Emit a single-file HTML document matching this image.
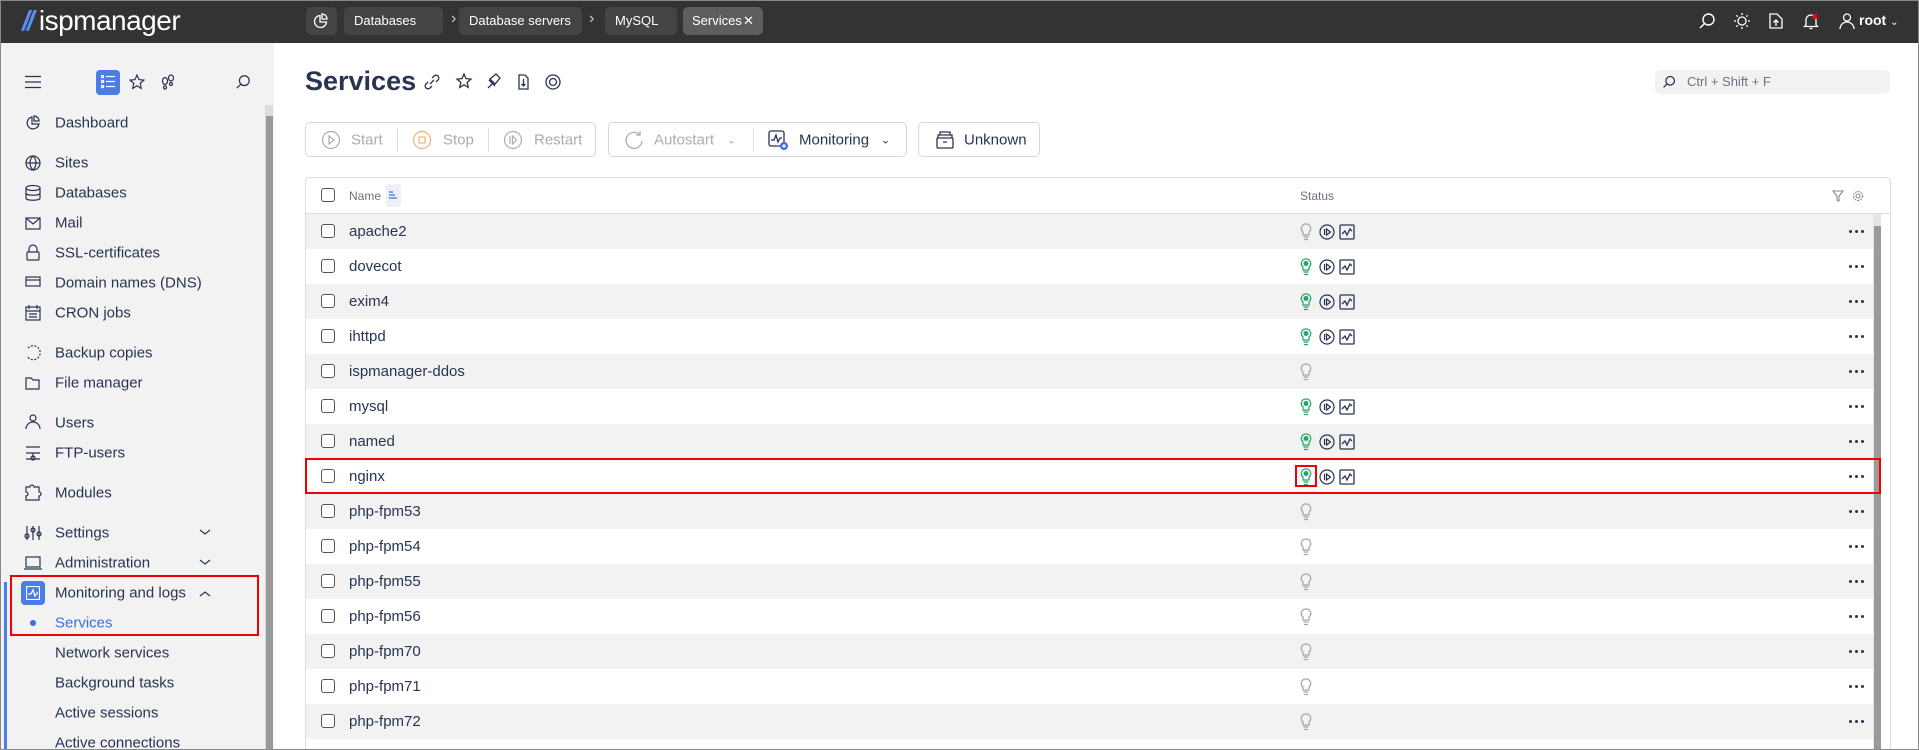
<!DOCTYPE html>
<html style="overflow:hidden;width:1919px;height:750px"><head><meta charset="utf-8"><style>
*{box-sizing:border-box;margin:0;padding:0}
body{width:1919px;height:750px;overflow:hidden;font-family:"Liberation Sans",sans-serif;background:#fff;position:relative;color:#283452}
.a{position:absolute}
.top{left:0;top:0;width:1919px;height:43px;background:#333}
.bc{position:absolute;top:7px;height:28px;background:#444;border-radius:5px;color:#fff;font-size:13px;line-height:28px;padding-left:10px;white-space:nowrap}
.side{left:0;top:43px;width:274px;height:707px;background:#f2f2f2}
.si{position:absolute;left:55px;font-size:15px;color:#283452;transform:translateY(-50%)}
.ic{position:absolute;transform:translate(-50%,-50%)}
.row{position:absolute;left:306px;width:1567px;height:35px}
.row.g{background:#f2f2f2}
.cb{position:absolute;left:15px;top:10px;width:14px;height:14px;border:1px solid #555;border-radius:3px;background:#fff}
.nm{position:absolute;left:43px;top:0;line-height:35px;font-size:15px;color:#283452}
.dots{position:absolute;left:1543px;top:16px;width:16px;height:4px}
.dots i{position:absolute;top:0;width:3px;height:3px;border-radius:50%;background:#283452}
.tb{position:absolute;top:122px;height:35px;border:1px solid #d7d7d7;border-radius:5px}
.bt{position:absolute;top:50%;transform:translateY(-50%);font-size:15px}
</style></head><body>
<div class="a top"></div>
<div class="a" style="left:22px;top:5px;color:#fff;font-size:28px;line-height:32px;letter-spacing:-0.5px"><span style="color:#5b8def;font-style:italic;font-weight:bold;letter-spacing:-3px">//</span> ispmanager</div>
<div class="bc" style="left:306px;width:31px;padding:0"><svg class="ic" style="left:15px;top:14px" width="16" height="16" viewBox="0 0 16 16" fill="none" stroke="#fff" stroke-width="1.3"><path d="M7 2.5A6 6 0 1 0 13.5 9H7z"/><path d="M9 1v5h5A5 5 0 0 0 9 1z"/></svg></div>
<div class="bc" style="left:344px;width:99px">Databases</div>
<div class="a" style="left:451px;top:10px;color:#ccc;font-size:16px">›</div>
<div class="bc" style="left:459px;width:123px">Database servers</div>
<div class="a" style="left:589px;top:10px;color:#ccc;font-size:16px">›</div>
<div class="bc" style="left:605px;width:72px">MySQL</div>
<div class="bc" style="left:683px;width:80px;background:#5e5e5e;padding-left:9px">Services<span style="position:absolute;left:60px;top:0;font-size:13px">✕</span></div>
<svg class="ic" style="left:1707px;top:21px" width="18" height="18" viewBox="0 0 18 18" fill="none" stroke="#fff" stroke-width="1.4"><circle cx="10.5" cy="7.5" r="5.5"/><path d="M6.5 11.5L2 16"/></svg>
<svg class="ic" style="left:1742px;top:21px" width="18" height="18" viewBox="0 0 18 18" fill="none" stroke="#fff" stroke-width="1.3"><circle cx="9" cy="9" r="4"/><path d="M9 1v2M9 15v2M1 9h2M15 9h2M3.3 3.3l1.4 1.4M13.3 13.3l1.4 1.4M3.3 14.7l1.4-1.4M13.3 4.7l1.4-1.4"/></svg>
<svg class="ic" style="left:1776px;top:21px" width="16" height="18" viewBox="0 0 16 18" fill="none" stroke="#fff" stroke-width="1.3"><path d="M2 2h7l5 5v9H2z"/><path d="M8 14V8M5.5 10.5L8 8l2.5 2.5"/></svg>
<svg class="ic" style="left:1811px;top:21px" width="16" height="18" viewBox="0 0 16 18" fill="none" stroke="#fff" stroke-width="1.3"><path d="M3 13V8a5 5 0 0 1 10 0v5l1.5 1.5h-13z"/><path d="M6.5 16.5h3"/><circle cx="12" cy="4.5" r="2.6" fill="#f00" stroke="none"/></svg>
<svg class="ic" style="left:1847px;top:21px" width="16" height="18" viewBox="0 0 16 18" fill="none" stroke="#fff" stroke-width="1.3"><circle cx="8" cy="5.5" r="3.5"/><path d="M1 17a7 7 0 0 1 14 0"/></svg>
<div class="a" style="left:1859px;top:12px;color:#fff;font-size:14px;font-weight:bold">root <span style="font-weight:normal;font-size:10px">⌄</span></div>

<div class="a side"></div>
<div class="a" style="left:265px;top:105px;width:8px;height:645px;background:#dcdcdc"></div>
<div class="a" style="left:266px;top:116px;width:7px;height:634px;background:#9a9a9a"></div>
<svg class="ic" style="left:33px;top:82px" width="16" height="14" viewBox="0 0 16 14" stroke="#283452" stroke-width="1.3"><path d="M0 1.5h16M0 7h16M0 12.5h16"/></svg>
<div class="a" style="left:96px;top:70px;width:24px;height:25px;background:#4a7de8;border-radius:4px"></div>
<svg class="ic" style="left:108px;top:82px" width="14" height="14" viewBox="0 0 14 14" stroke="#fff" stroke-width="1.2" fill="none"><rect x="0.5" y="0.5" width="2" height="2"/><rect x="0.5" y="5.5" width="2" height="2"/><rect x="0.5" y="10.5" width="2" height="2"/><path d="M5 1.5h9M5 6.5h9M5 11.5h9"/></svg>
<svg class="ic" style="left:137px;top:82px" width="16" height="16" viewBox="0 0 16 16" fill="none" stroke="#283452" stroke-width="1.2"><path d="M8 1l2 4.6 5 .5-3.8 3.3 1.1 5L8 11.8 3.7 14.4l1.1-5L1 6.1l5-.5z"/></svg>
<svg class="ic" style="left:168px;top:82px" width="16" height="16" viewBox="0 0 16 16" fill="none" stroke="#283452" stroke-width="1.2"><ellipse cx="5" cy="7" rx="2.5" ry="3.5"/><circle cx="5" cy="13.5" r="1.5"/><ellipse cx="11" cy="4" rx="2.5" ry="3"/><circle cx="11" cy="10" r="1.5"/></svg>
<svg class="ic" style="left:243px;top:82px" width="16" height="16" viewBox="0 0 18 18" fill="none" stroke="#283452" stroke-width="1.4"><circle cx="10.5" cy="7.5" r="5.5"/><path d="M6.5 11.5L2 16"/></svg>

<div class="si" style="top:123px">Dashboard</div>
<div class="si" style="top:163px">Sites</div>
<div class="si" style="top:193px">Databases</div>
<div class="si" style="top:223px">Mail</div>
<div class="si" style="top:253px">SSL-certificates</div>
<div class="si" style="top:283px">Domain names (DNS)</div>
<div class="si" style="top:313px">CRON jobs</div>
<div class="si" style="top:353px">Backup copies</div>
<div class="si" style="top:383px">File manager</div>
<div class="si" style="top:423px">Users</div>
<div class="si" style="top:453px">FTP-users</div>
<div class="si" style="top:493px">Modules</div>
<div class="si" style="top:533px">Settings</div>
<div class="si" style="top:563px">Administration</div>
<div class="si" style="top:593px">Monitoring and logs</div>
<div class="si" style="top:623px;color:#3b6fe0">Services</div>
<div class="si" style="top:653px">Network services</div>
<div class="si" style="top:683px">Background tasks</div>
<div class="si" style="top:713px">Active sessions</div>
<div class="si" style="top:743px">Active connections</div>
<svg class="a" style="left:0;top:0" width="274" height="750" fill="none" stroke="#283452" stroke-width="1.2">
<path d="M32 117a6 6 0 1 0 7 7h-7z"/><path d="M34 116v5h5a5 5 0 0 0-5-5z"/>
<circle cx="33" cy="163" r="7"/><path d="M26 163h14M33 156c-4 4-4 10 0 14M33 156c4 4 4 10 0 14"/>
<ellipse cx="33" cy="188" rx="7" ry="2.5"/><path d="M26 188v10c0 3 14 3 14 0v-10M26 193c0 3 14 3 14 0"/>
<rect x="26" y="218" width="14" height="11"/><path d="M26 218l7 6 7-6"/>
<rect x="27" y="252" width="12" height="8" rx="1"/><path d="M29 252v-3a4 4 0 0 1 8 0v3"/>
<rect x="26" y="277" width="14" height="9"/><path d="M26 280h14"/>
<rect x="26" y="307" width="14" height="13"/><path d="M26 311h14M29 305v4M37 305v4M29 314h8M29 317h8"/>
<path d="M28 348a7 7 0 1 1-1 8" stroke-dasharray="2 1.5"/>
<path d="M26 378h5l2 2h6v9H26z"/>
<circle cx="33" cy="418" r="3"/><path d="M26 429a7 7 0 0 1 14 0"/>
<path d="M26 447h14M26 453h14M33 453v5M26 459h14"/><circle cx="33" cy="458" r="2"/>
<path d="M26 487h4a2 2 0 0 1 4 0h5v5a2 2 0 0 1 0 4v4H26v-4a2 2 0 0 0 0-4z"/>
<path d="M27 526v14M33 526v14M39 526v14"/><circle cx="27" cy="536" r="2"/><circle cx="33" cy="530" r="2"/><circle cx="39" cy="534" r="2"/>
<rect x="26" y="557" width="14" height="10"/><path d="M24 569h18"/>
<path d="M200 530l5 4 5-4M200 560l5 4 5-4M200 596l5-4 5 4"/>
</svg>
<div class="a" style="left:21px;top:581px;width:24px;height:24px;background:#4a7de8;border-radius:4px"></div>
<svg class="ic" style="left:33px;top:593px" width="14" height="14" viewBox="0 0 14 14" fill="none" stroke="#fff" stroke-width="1.2"><rect x="0.5" y="0.5" width="13" height="13"/><path d="M2 8h3l2-4 2 6 2-3h1"/></svg>
<div class="a" style="left:30px;top:620px;width:6px;height:6px;border-radius:50%;background:#3b6fe0"></div>
<div class="a" style="left:4px;top:582px;width:3px;height:168px;background:#4a7de8"></div>
<div class="a" style="left:10px;top:575px;width:249px;height:61px;border:2px solid #e00"></div>

<div class="a" style="left:305px;top:66px;font-size:27px;font-weight:bold;color:#283452">Services</div>
<svg class="a" style="left:420px;top:70px" width="150" height="24" fill="none" stroke="#283452" stroke-width="1.3">
<path d="M10 14l4-4M8 12l-2 2a2.5 2.5 0 0 0 4 4l2-2M16 12l2-2a2.5 2.5 0 0 0-4-4l-2 2"/>
<path d="M44 4l2 4.6 5 .5-3.8 3.3 1.1 5L44 14.8 39.7 17.4l1.1-5L37 9.1l5-.5z"/>
<path d="M68 18l5-5M70 9l6-5 4 4-5 6zM69 10l6 6"/>
<path d="M99 5h6l3 3v11h-9zM103.5 9v7M101.5 14l2 2 2-2"/>
<circle cx="133" cy="12" r="7"/><circle cx="133" cy="12" r="3.5"/>
</svg>
<div class="a" style="left:1655px;top:70px;width:235px;height:24px;background:#f2f2f2;border-radius:5px"></div>
<svg class="ic" style="left:1669px;top:82px" width="14" height="14" viewBox="0 0 18 18" fill="none" stroke="#283452" stroke-width="1.6"><circle cx="10.5" cy="7.5" r="5.5"/><path d="M6.5 11.5L2 16"/></svg>
<div class="a" style="left:1687px;top:74px;font-size:13px;color:#6b7280">Ctrl + Shift + F</div>

<div class="tb" style="left:305px;width:291px;color:#a8adb5">
<svg class="ic" style="left:25px;top:17px" width="20" height="20" fill="none" stroke="#a8adb5" stroke-width="1.2"><circle cx="10" cy="10" r="8.5"/><path d="M8 6l5 4-5 4z"/></svg>
<div class="bt" style="left:45px">Start</div>
<div class="a" style="left:91px;top:5px;width:1px;height:24px;background:#ddd"></div>
<svg class="ic" style="left:116px;top:17px" width="20" height="20" fill="none" stroke="#f0b27a" stroke-width="1.2"><circle cx="10" cy="10" r="8.5"/><rect x="7" y="7" width="6" height="6"/></svg>
<div class="bt" style="left:137px">Stop</div>
<div class="a" style="left:182px;top:5px;width:1px;height:24px;background:#ddd"></div>
<svg class="ic" style="left:207px;top:17px" width="20" height="20" fill="none" stroke="#a8adb5" stroke-width="1.2"><circle cx="10" cy="10" r="8.5"/><path d="M7 6v8M9.5 6l4 4-4 4z"/></svg>
<div class="bt" style="left:228px">Restart</div>
</div>
<div class="tb" style="left:608px;width:299px">
<svg class="ic" style="left:25px;top:17px" width="20" height="20" fill="none" stroke="#a8adb5" stroke-width="1.3"><path d="M16 5A8 8 0 1 0 18 11M16 1v4h-4"/></svg>
<div class="bt" style="left:45px;color:#a8adb5">Autostart</div>
<div class="bt" style="left:118px;color:#a8adb5;font-size:11px">⌄</div>
<div class="a" style="left:144px;top:5px;width:1px;height:24px;background:#ddd"></div>
<svg class="ic" style="left:169px;top:17px" width="22" height="22" fill="none" stroke="#283452" stroke-width="1.3"><rect x="2" y="2" width="15" height="15" rx="2"/><path d="M4 11h3l2-5 2 7 2-4h2"/><circle cx="17" cy="17" r="4" fill="#3b6fe0" stroke="none"/><path d="M17 15v4M15 17h4" stroke="#fff"/></svg>
<div class="bt" style="left:190px;color:#283452">Monitoring</div>
<div class="bt" style="left:272px;color:#283452;font-size:11px">⌄</div>
</div>
<div class="tb" style="left:918px;width:122px">
<svg class="ic" style="left:26px;top:17px" width="20" height="20" fill="none" stroke="#283452" stroke-width="1.3"><rect x="2" y="8" width="16" height="10" rx="1"/><path d="M3 8V5h14v3M5 5V2h10v3M8 12h4"/></svg>
<div class="bt" style="left:45px;color:#283452">Unknown</div>
</div>

<div class="a" style="left:305px;top:177px;width:1586px;height:600px;border:1px solid #ddd;border-radius:5px"></div>
<div class="a" style="left:321px;top:188px;width:14px;height:14px;border:1px solid #555;border-radius:3px"></div>
<div class="a" style="left:349px;top:189px;font-size:12px;color:#6b7280">Name</div>
<div class="a" style="left:386px;top:184px;width:15px;height:23px;background:#eef0f5;border-radius:3px"></div>
<svg class="ic" style="left:393px;top:195px" width="10" height="10" stroke="#3b6fe0" stroke-width="1.2"><path d="M1 2h4M1 5h6M1 8h8"/></svg>
<div class="a" style="left:1300px;top:189px;font-size:12px;color:#6b7280">Status</div>
<svg class="a" style="left:1832px;top:189px" width="34" height="14" fill="none" stroke="#888" stroke-width="1.1"><path d="M1 2h10l-4 5v5l-2-1V7z"/><circle cx="26" cy="7" r="2"/><circle cx="26" cy="7" r="4.5" stroke-dasharray="2 1"/></svg>
<div class="a" style="left:306px;top:213px;width:1584px;height:1px;background:#ddd"></div>
<div class="a" style="left:1873px;top:214px;width:8px;height:536px;background:#e5e5e5"></div>
<div class="a" style="left:1874px;top:226px;width:7px;height:524px;background:#9a9a9a"></div>

<div id="rows"></div>
<script>
var names=["apache2","dovecot","exim4","ihttpd","ispmanager-ddos","mysql","named","nginx","php-fpm53","php-fpm54","php-fpm55","php-fpm56","php-fpm70","php-fpm71","php-fpm72"];
var st=[0,1,1,1,2,1,1,1,2,2,2,2,2,2,2];
var h="";
names.forEach(function(n,i){
 var top=214+i*35, g=i%2==0?" g":"";
 var bc=st[i]==1?"#22a565":"#a0a4ab";
 var bulb='<svg class="a" style="left:994px;top:9px" width="12" height="18" fill="none" stroke="'+bc+'" stroke-width="1.2"><path d="M6 1a4.5 4.5 0 0 0-3 8v3h6V9a4.5 4.5 0 0 0-3-8zM3.5 14h5M4 16.5h4"/>'+(st[i]==1?'<circle cx="6" cy="5.5" r="2.5" fill="'+bc+'" stroke="none"/>':'')+'</svg>';
 var more=st[i]<2?'<svg class="a" style="left:1013px;top:10px" width="16" height="16" fill="none" stroke="#283452" stroke-width="1.2"><circle cx="8" cy="8" r="7"/><path d="M5.5 5v6M7.5 5l4 3-4 3z"/></svg><svg class="a" style="left:1033px;top:10px" width="16" height="16" fill="none" stroke="#283452" stroke-width="1.3"><rect x="1" y="1" width="14" height="14" rx="1"/><path d="M3 10l3-3 2 4 3-6 2 2"/></svg>':'';
 h+='<div class="row'+g+'" style="top:'+top+'px"><div class="cb"></div><div class="nm">'+n+'</div>'+bulb+more+'<div class="dots"><i style="left:0"></i><i style="left:6px"></i><i style="left:12px"></i></div></div>';
});
document.getElementById("rows").innerHTML=h;
</script>
<div class="a" style="left:305px;top:458px;width:1576px;height:36px;border:2px solid #e00"></div>
<div class="a" style="left:1295px;top:465px;width:22px;height:22px;border:2px solid #e00"></div>
<div class="a" style="left:0;top:0;width:1919px;height:750px;border:1px solid #888;pointer-events:none"></div>
</body></html>
